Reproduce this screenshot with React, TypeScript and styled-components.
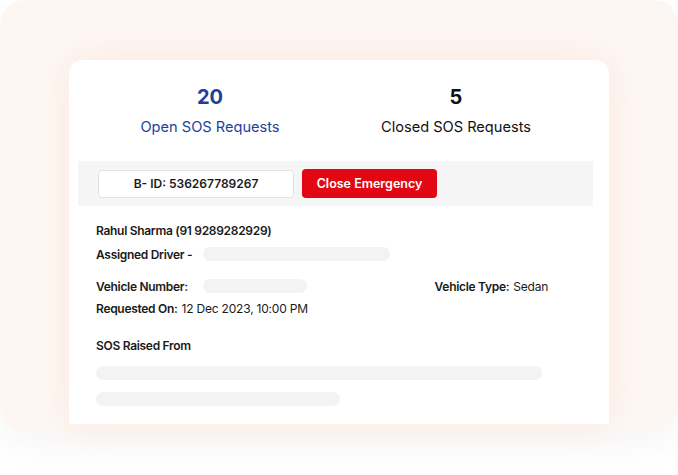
import React from 'react'
import styled, { createGlobalStyle } from 'styled-components'

const GlobalStyle = createGlobalStyle`
  html, body {
    margin: 0;
    padding: 0;
    background: #ffffff;
  }
  * {
    box-sizing: border-box;
  }
`

const Page = styled.div`
  width: 678px;
  height: 475px;
  background: #ffffff;
  overflow: hidden;
`

const Panel = styled.div`
  width: 678px;
  height: 430px;
  border-radius: 24px;
  background: #fdf7f3;
  padding: 60px 69px 6px;
  box-shadow: 0 18px 30px rgba(120, 90, 70, 0.05);
`

const Card = styled.div`
  height: 364px;
  background: #ffffff;
  border-radius: 14px 14px 0 0;
  box-shadow: 0 0 36px rgba(250, 205, 185, 0.35);
  padding: 0 16px 0 9px;
  display: flex;
  flex-direction: column;
`

const Stats = styled.div`
  display: flex;
  padding: 25px 14px 0 9px;
  height: 101px;
`

const Stat = styled.div`
  flex: 1;
  display: flex;
  flex-direction: column;
  align-items: center;
  gap: 9px;
  font-family: Inter, 'Liberation Sans', sans-serif;
  color: ${(p: { $active?: boolean }) => (p.$active ? '#1d3f9e' : '#111111')};
`

const Count = styled.div`
  font-size: 20px;
  font-weight: 700;
  line-height: 24px;
`

const Label = styled.div`
  font-size: 14.6px;
  font-weight: 400;
  line-height: 18px;
`

const Toolbar = styled.div`
  display: flex;
  align-items: center;
  gap: 8px;
  height: 45px;
  background: #f5f5f5;
  padding: 0 20px;
`

const IdBox = styled.div`
  width: 196px;
  height: 28px;
  background: #ffffff;
  border: 1px solid #e2e2e2;
  border-radius: 4px;
  display: flex;
  align-items: center;
  justify-content: center;
  font-family: Inter, 'Liberation Sans', sans-serif;
  font-size: 12px;
  font-weight: 600;
  color: #1a1a1a;
`

const CloseButton = styled.button`
  width: 135px;
  height: 29px;
  border: none;
  border-radius: 4px;
  background: #e30613;
  color: #ffffff;
  font-family: Inter, 'Liberation Sans', sans-serif;
  font-size: 12.5px;
  font-weight: 600;
  padding: 0;
`

const Details = styled.div`
  display: flex;
  flex-direction: column;
  padding: 13px 0 0 18px;
  font-family: Inter, 'Liberation Sans', sans-serif;
  font-size: 12px;
  color: #1a1a1a;
`

const Row = styled.div`
  display: flex;
  align-items: center;
  height: 22px;
  margin-top: ${(p: { $gap?: number }) => p.$gap ?? 0}px;
`

const Key = styled.span`
  font-weight: 600;
  width: ${(p: { $w?: number }) => (p.$w ? `${p.$w}px` : 'auto')};
  flex-shrink: 0;
  letter-spacing: -0.3px;
`

const Value = styled.span`
  font-weight: 400;
  margin-left: 4px;
  letter-spacing: -0.2px;
`

const Skeleton = styled.div`
  height: 14px;
  width: ${(p: { $w: number }) => p.$w}px;
  border-radius: 7px;
  background: #f3f3f3;
`

const Cell = styled.div`
  display: flex;
  align-items: center;
  width: ${(p: { $w: number }) => p.$w}px;
`

const SectionTitle = styled.div`
  font-weight: 600;
  letter-spacing: -0.3px;
  margin-top: 19px;
  line-height: 16px;
`

const Bars = styled.div`
  display: flex;
  flex-direction: column;
  gap: 12px;
  margin-top: 12px;
`

export default function App() {
  return (
    <Page>
      <GlobalStyle />
      <Panel>
        <Card>
          <Stats>
            <Stat $active>
              <Count>20</Count>
              <Label>Open SOS Requests</Label>
            </Stat>
            <Stat>
              <Count>5</Count>
              <Label>Closed SOS Requests</Label>
            </Stat>
          </Stats>
          <Toolbar>
            <IdBox>B- ID: 536267789267</IdBox>
            <CloseButton>Close Emergency</CloseButton>
          </Toolbar>
          <Details>
            <Row>
              <Key>Rahul Sharma (91 9289282929)</Key>
            </Row>
            <Row $gap={2}>
              <Key $w={107}>Assigned Driver -</Key>
              <Skeleton $w={187} />
            </Row>
            <Row $gap={10}>
              <Cell $w={342}>
                <Key $w={107}>Vehicle Number:</Key>
                <Skeleton $w={104} />
              </Cell>
              <Cell $w={160}>
                <Key>Vehicle Type:</Key>
                <Value>Sedan</Value>
              </Cell>
            </Row>
            <Row>
              <Key>Requested On:</Key>
              <Value>12 Dec 2023, 10:00 PM</Value>
            </Row>
            <SectionTitle>SOS Raised From</SectionTitle>
            <Bars>
              <Skeleton $w={446} />
              <Skeleton $w={244} />
            </Bars>
          </Details>
        </Card>
      </Panel>
    </Page>
  )
}
